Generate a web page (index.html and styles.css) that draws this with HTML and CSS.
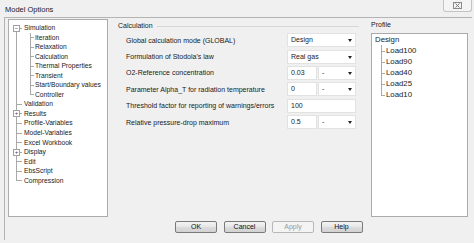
FILE: index.html
```html
<!DOCTYPE html>
<html>
<head>
<meta charset="utf-8">
<title>Model Options</title>
<link rel="stylesheet" href="styles.css">
</head>
<body>
<div class="window">
  <div class="titlebar">
    <span class="title">Model Options</span>
    <div class="close">
      <svg width="9" height="7" viewBox="0 0 9 7"><rect x="0.5" y="0.5" width="8" height="6" fill="none" stroke="#8a8a8a"/><path d="M2.5 1.5 L6.5 5.5 M6.5 1.5 L2.5 5.5" stroke="#7a7a7a" stroke-width="1"/></svg>
    </div>
  </div>
  <div class="frame">
    <div class="main">
      <div class="nav">
        <ul class="tree">
          <li><span class="toggle">−</span><span class="node">Simulation</span>
            <ul class="sub">
              <li><span class="node">Iteration</span></li>
              <li><span class="node">Relaxation</span></li>
              <li><span class="node">Calculation</span></li>
              <li><span class="node">Thermal Properties</span></li>
              <li><span class="node">Transient</span></li>
              <li><span class="node">Start/Boundary values</span></li>
              <li><span class="node">Controller</span></li>
            </ul>
          </li>
          <li><span class="node">Validation</span></li>
          <li><span class="toggle">+</span><span class="node">Results</span></li>
          <li><span class="node">Profile-Variables</span></li>
          <li><span class="node">Model-Variables</span></li>
          <li><span class="node">Excel Workbook</span></li>
          <li><span class="toggle">+</span><span class="node">Display</span></li>
          <li><span class="node">Edit</span></li>
          <li><span class="node">EbsScript</span></li>
          <li><span class="node">Compression</span></li>
        </ul>
      </div>
      <div class="calc">
        <div class="group-head"><span class="group-label">Calculation</span><span class="rule"></span></div>
        <div class="rows">
          <div class="row">
            <span class="label">Global calculation mode (GLOBAL)</span>
            <div class="combo">Design<span class="arrow"></span></div>
          </div>
          <div class="row">
            <span class="label">Formulation of Stodola's law</span>
            <div class="combo">Real gas<span class="arrow"></span></div>
          </div>
          <div class="row">
            <span class="label">O2-Reference concentration</span>
            <div class="split"><div class="field">0.03</div><div class="combo">-<span class="arrow"></span></div></div>
          </div>
          <div class="row">
            <span class="label">Parameter Alpha_T for radiation temperature</span>
            <div class="split"><div class="field">0</div><div class="combo">-<span class="arrow"></span></div></div>
          </div>
          <div class="row">
            <span class="label">Threshold factor for reporting of warnings/errors</span>
            <div class="field">100</div>
          </div>
          <div class="row">
            <span class="label">Relative pressure-drop maximum</span>
            <div class="split"><div class="field">0.5</div><div class="combo">-<span class="arrow"></span></div></div>
          </div>
        </div>
      </div>
      <div class="profile">
        <div class="profile-label">Profile</div>
        <div class="list">
          <div class="root">Design</div>
          <ul class="ptree">
            <li>Load100</li>
            <li>Load90</li>
            <li>Load40</li>
            <li>Load25</li>
            <li>Load10</li>
          </ul>
        </div>
      </div>
    </div>
    <div class="buttons">
      <button class="btn">OK</button>
      <button class="btn">Cancel</button>
      <button class="btn disabled">Apply</button>
      <button class="btn">Help</button>
    </div>
  </div>
</div>
</body>
</html>
```
FILE: styles.css
```css
* { box-sizing: border-box; }
html, body { margin: 0; padding: 0; }
body {
  background: #f0f0f0;
  font-family: "Liberation Sans", Arial, sans-serif;
  font-size: 7px;
  color: #1a1a1a;
}
.window {
  width: 474px;
  height: 243px;
  overflow: hidden;
  background: #f0f0f0;
}
.titlebar {
  height: 17px;
  display: flex;
  align-items: flex-start;
}
.title {
  padding: 5px 0 0 5px;
  font-size: 7.5px;
  line-height: 10px;
  color: #222;
}
.close {
  margin-left: auto;
  margin-right: 2px;
  width: 29px;
  height: 12px;
  border: 1px solid #c4c4c4;
  border-top: none;
  border-radius: 0 0 3px 3px;
  background: #f4f4f4;
  display: flex;
  align-items: center;
  justify-content: center;
}
.frame {
  margin-left: 4px;
  width: 468px;
  height: 223px;
  border-top: 1px solid #b4b4b4;
  border-left: 1px solid #b4b4b4;
  padding: 1px 0 0 3px;
}
.main {
  display: flex;
  height: 198px;
}
.nav {
  width: 100px;
  height: 198px;
  background: #fff;
  border: 1px solid #ababab;
  padding: 3px 0 0 0;
  font-size: 6.7px;
}
ul { list-style: none; margin: 0; padding: 0; }
.tree li {
  position: relative;
  padding-left: 15px;
}
.tree .node {
  display: block;
  height: 9.55px;
  line-height: 9.55px;
  white-space: nowrap;
}
.tree li::before {
  content: "";
  position: absolute;
  left: 7px;
  top: 4.5px;
  width: 6px;
  border-top: 1px solid #a9a9a9;
}
.tree li::after {
  content: "";
  position: absolute;
  left: 7px;
  top: 0;
  bottom: 0;
  border-left: 1px solid #a9a9a9;
}
.tree > li:first-child::after { top: 4.5px; }
.tree > li:last-child::after { bottom: auto; height: 5px; }
.tree .sub li { padding-left: 11px; }
.tree .sub li::before { left: 6px; width: 4px; }
.tree .sub li::after { left: 6px; }
.tree .sub li:last-child::after { bottom: auto; height: 5px; }
.toggle {
  position: absolute;
  left: 4px;
  top: 1.5px;
  width: 7px;
  height: 7px;
  border: 1px solid #a0a0a0;
  background: #fff;
  z-index: 1;
  font-size: 6px;
  line-height: 5px;
  text-align: center;
  color: #444;
}
.calc {
  width: 251px;
  margin-left: 2px;
}
.group-head {
  display: flex;
  align-items: center;
  height: 13px;
  padding-left: 8px;
}
.group-label { white-space: nowrap; }
.rule {
  flex: 1;
  margin-left: 4px;
  margin-right: 2px;
  border-top: 1px solid #d6d6d6;
  margin-top: 2px;
}
.row {
  display: grid;
  grid-template-columns: 177px 69px;
  align-items: center;
  height: 16.4px;
}
.label {
  padding-left: 16px;
  white-space: nowrap;
}
.combo, .field {
  position: relative;
  height: 14px;
  line-height: 12px;
  background: #fff;
  border: 1px solid #e2e2e2;
  padding-left: 3px;
  white-space: nowrap;
}
.arrow {
  position: absolute;
  right: 3px;
  top: 5px;
  width: 0;
  height: 0;
  border-left: 2.5px solid transparent;
  border-right: 2.5px solid transparent;
  border-top: 3px solid #222;
}
.split {
  display: grid;
  grid-template-columns: 30px 38px;
  gap: 1px;
}
.profile {
  padding-left: 10px;
}
.profile-label {
  height: 14px;
  line-height: 12px;
}
.list {
  width: 97px;
  height: 184px;
  background: #fff;
  border: 1px solid #ababab;
  padding-left: 3px;
  font-size: 7.8px;
}
.root {
  height: 11px;
  line-height: 11px;
}
.ptree li {
  position: relative;
  padding-left: 11px;
  height: 11px;
  line-height: 11px;
}
.ptree li::before {
  content: "";
  position: absolute;
  left: 6px;
  top: 5.5px;
  width: 4px;
  border-top: 1px solid #a9a9a9;
}
.ptree li::after {
  content: "";
  position: absolute;
  left: 6px;
  top: 0;
  bottom: 0;
  border-left: 1px solid #a9a9a9;
}
.ptree li:last-child::after { bottom: auto; height: 6px; }
.buttons {
  display: flex;
  gap: 6.5px;
  margin-top: 4px;
  padding-left: 167px;
}
.btn {
  width: 42px;
  height: 12px;
  padding: 0;
  font-family: "Liberation Sans", Arial, sans-serif;
  font-size: 7px;
  line-height: 10px;
  color: #111;
  border: 1px solid #7a7a7a;
  border-radius: 2px;
  background: linear-gradient(#f4f4f4, #e6e6e6 50%, #dcdcdc 51%, #d2d2d2);
}
.btn.disabled {
  color: #9a9a9a;
  border-color: #b8b8b8;
  background: #f4f4f4;
}
```
